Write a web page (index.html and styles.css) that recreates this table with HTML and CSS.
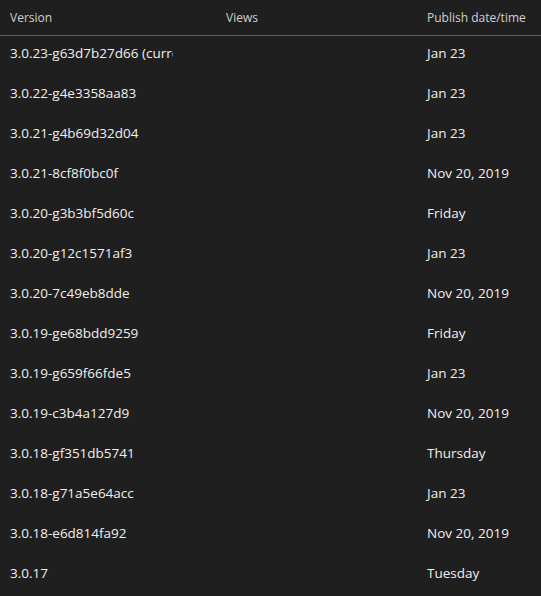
FILE: index.html
```html
<!DOCTYPE html>
<html>
<head>
<meta charset="utf-8">
<link rel="stylesheet" href="styles.css">
</head>
<body>
<div class="table">
  <div class="row head">
    <div class="cell c1">Version</div>
    <div class="cell c2">Views</div>
    <div class="cell c3">Publish date/time</div>
  </div>
  <div class="row"><div class="cell c1"><span class="clip">3.0.23-g63d7b27d66 (current)</span></div><div class="cell c2"></div><div class="cell c3">Jan 23</div></div>
  <div class="row"><div class="cell c1"><span class="clip">3.0.22-g4e3358aa83</span></div><div class="cell c2"></div><div class="cell c3">Jan 23</div></div>
  <div class="row"><div class="cell c1"><span class="clip">3.0.21-g4b69d32d04</span></div><div class="cell c2"></div><div class="cell c3">Jan 23</div></div>
  <div class="row"><div class="cell c1"><span class="clip">3.0.21-8cf8f0bc0f</span></div><div class="cell c2"></div><div class="cell c3">Nov 20, 2019</div></div>
  <div class="row"><div class="cell c1"><span class="clip">3.0.20-g3b3bf5d60c</span></div><div class="cell c2"></div><div class="cell c3">Friday</div></div>
  <div class="row"><div class="cell c1"><span class="clip">3.0.20-g12c1571af3</span></div><div class="cell c2"></div><div class="cell c3">Jan 23</div></div>
  <div class="row"><div class="cell c1"><span class="clip">3.0.20-7c49eb8dde</span></div><div class="cell c2"></div><div class="cell c3">Nov 20, 2019</div></div>
  <div class="row"><div class="cell c1"><span class="clip">3.0.19-ge68bdd9259</span></div><div class="cell c2"></div><div class="cell c3">Friday</div></div>
  <div class="row"><div class="cell c1"><span class="clip">3.0.19-g659f66fde5</span></div><div class="cell c2"></div><div class="cell c3">Jan 23</div></div>
  <div class="row"><div class="cell c1"><span class="clip">3.0.19-c3b4a127d9</span></div><div class="cell c2"></div><div class="cell c3">Nov 20, 2019</div></div>
  <div class="row"><div class="cell c1"><span class="clip">3.0.18-gf351db5741</span></div><div class="cell c2"></div><div class="cell c3">Thursday</div></div>
  <div class="row"><div class="cell c1"><span class="clip">3.0.18-g71a5e64acc</span></div><div class="cell c2"></div><div class="cell c3">Jan 23</div></div>
  <div class="row"><div class="cell c1"><span class="clip">3.0.18-e6d814fa92</span></div><div class="cell c2"></div><div class="cell c3">Nov 20, 2019</div></div>
  <div class="row"><div class="cell c1"><span class="clip">3.0.17</span></div><div class="cell c2"></div><div class="cell c3">Tuesday</div></div>
</div>
</body>
</html>
```
FILE: styles.css
```css
html, body {
  margin: 0;
  padding: 0;
  background: #201f1f;
}
body {
  font-family: "Open Sans", "Noto Sans", sans-serif;
  color: #f0efee;
  font-size: 13.5px;
  width: 541px;
  height: 596px;
  overflow: hidden;
}
.table {
  display: flex;
  flex-direction: column;
}
.row {
  display: grid;
  grid-template-columns: 216px 201px 1fr;
  height: 40px;
  align-items: center;
}
.row.head {
  height: 35px;
  border-bottom: 1px solid #5f5e5c;
  font-size: 12px;
  color: #d2d0ce;
  align-items: center;
  margin-bottom: -3px;
}
.cell {
  padding-left: 10px;
  white-space: nowrap;
}
.c1 {
  padding-right: 43px;
  overflow: hidden;
}
.clip {
  display: block;
  overflow: hidden;
}
```
